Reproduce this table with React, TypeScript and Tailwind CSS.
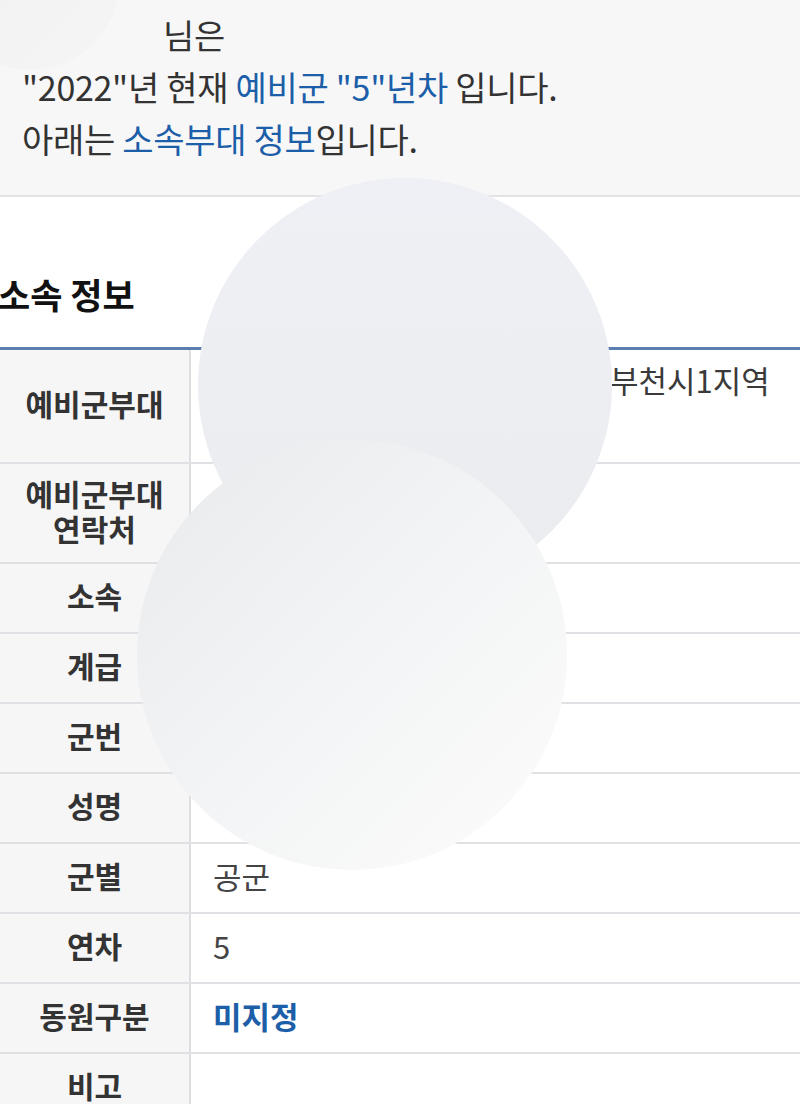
const ROWS: { label: string[]; value?: string; h: string; tone?: "blue" }[] = [
  { label: ["예비군부대"], h: "h-[112px]" },
  { label: ["예비군부대", "연락처"], h: "h-[98px]" },
  { label: ["소속"], h: "h-[68px]" },
  { label: ["계급"], h: "h-[68px]" },
  { label: ["군번"], h: "h-[68px]" },
  { label: ["성명"], h: "h-[68px]" },
  { label: ["군별"], value: "공군", h: "h-[68px]" },
  { label: ["연차"], value: "5", h: "h-[68px]" },
  { label: ["동원구분"], value: "미지정", h: "h-[68px]", tone: "blue" },
  { label: ["비고"], h: "h-[68px]" },
];

export default function App() {
  return (
    <div
      className="relative w-[800px] h-[1104px] overflow-hidden bg-white text-[#333]"
      style={{ fontFamily: '"Noto Sans CJK KR", "Noto Sans", sans-serif' }}
    >
      {/* intro */}
      <div className="h-[197px] bg-[#f7f7f7] border-b-2 border-[#e3e3e4] pl-[22px] pt-[9px] text-[34px] leading-[52px] tracking-[-0.3px]">
        <p className="pl-[141px]">님은</p>
        <p>
          "2022"년 현재 <span className="text-[#1d5ea9]">예비군 "5"년차</span> 입니다.
        </p>
        <p>
          아래는 <span className="text-[#1d5ea9]">소속부대 정보</span>입니다.
        </p>
      </div>

      <h2 className="mt-[75px] mb-[31px] -ml-[2px] text-[35px] leading-[44px] font-bold text-[#111]">
        소속 정보
      </h2>

      {/* table */}
      <div className="border-t-[3px] border-[#5b7eb0]">
        {ROWS.map((row, i) => (
          <div key={i} className="flex border-b-2 border-[#dfe1e5]">
            <div
              className={`${row.h} w-[191px] shrink-0 bg-[#f6f6f7] border-r-2 border-[#dcdee2] flex flex-col items-center justify-center pb-[5px] text-[30px] leading-[35px] font-bold text-[#333]`}
            >
              {row.label.map((l) => (
                <span key={l}>{l}</span>
              ))}
            </div>
            {i === 0 ? (
              <div className="flex-1 pl-[419px] pt-[11px] text-[31px] leading-[38px] text-[#3a3a3a]">
                부천시1지역
              </div>
            ) : (
              <div
                className={`flex-1 flex items-center pl-[22px] pb-[5px] text-[31px] leading-[38px] ${
                  row.tone === "blue" ? "font-bold text-[#1d5ea9]" : "text-[#444]"
                }`}
              >
                {row.value}
              </div>
            )}
          </div>
        ))}
      </div>

      {/* redaction blobs */}
      <div className="absolute left-[-60px] top-[-110px] w-[180px] h-[180px] rounded-full bg-linear-to-br from-[#f0f0f1] to-[#f5f5f6]" />
      <div className="absolute left-[198px] top-[178px] w-[414px] h-[414px] rounded-full bg-linear-to-b from-[#eef0f5] to-[#ebecef]" />
      <div className="absolute left-[137px] top-[440px] w-[430px] h-[430px] rounded-full bg-linear-to-br from-[#e9eaec] via-[#f3f4f5] to-[#fcfcfc]" />
    </div>
  );
}
